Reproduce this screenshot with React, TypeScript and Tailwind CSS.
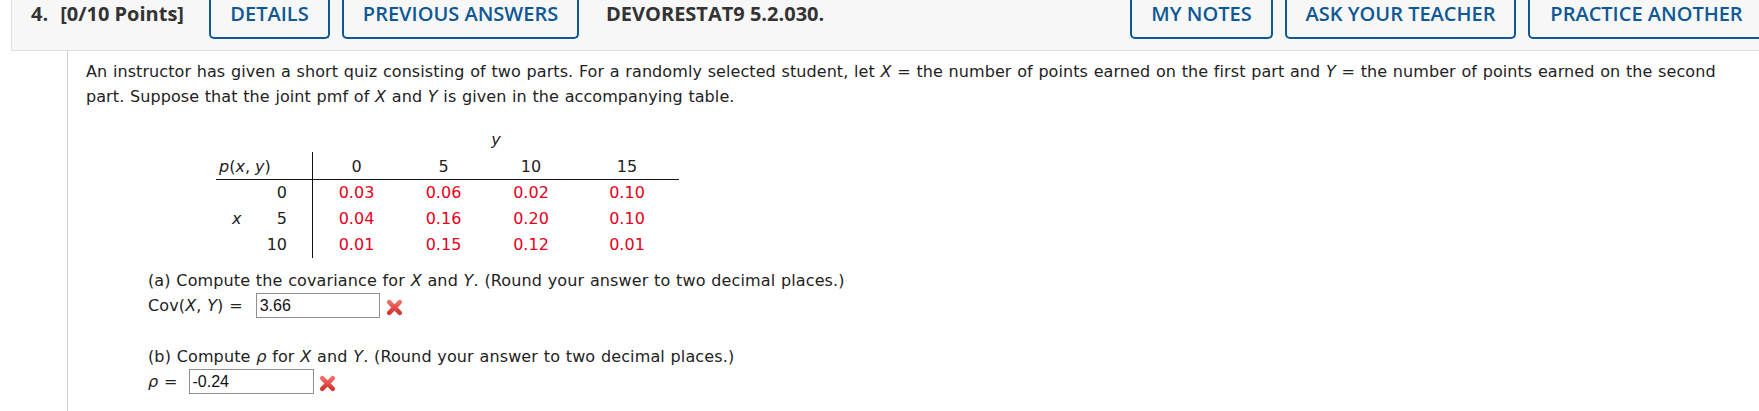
import React from "react";

const NavButton: React.FC<{ label: string; w: string }> = ({ label, w }) => (
  <div
    className={`${w} h-[39px] shrink-0 border-2 border-t-0 border-[#0d5895] rounded-b-[5px] text-[#0d5895] font-semibold text-[20px] leading-[24px] pt-[2px] flex justify-center items-start whitespace-nowrap`}
  >
    {label}
  </div>
);

const WrongMark = () => (
  <svg width="17" height="17" viewBox="0 0 16 16" className="mt-[4px]">
    <defs>
      <linearGradient id="xg" x1="0" y1="0" x2="0" y2="1">
        <stop offset="0" stopColor="#f26a66" />
        <stop offset="1" stopColor="#d63430" />
      </linearGradient>
    </defs>
    <path d="M3 3 L13 13 M13 3 L3 13" stroke="url(#xg)" strokeWidth="4.2" strokeLinecap="round" fill="none" />
  </svg>
);

const cols = ["w-[87px]", "w-[87px]", "w-[88px]", "w-[104px]"];
const heads = ["0", "5", "10", "15"];
const rows = [
  { x: "0", vals: ["0.03", "0.06", "0.02", "0.10"], label: "" },
  { x: "5", vals: ["0.04", "0.16", "0.20", "0.10"], label: "x" },
  { x: "10", vals: ["0.01", "0.15", "0.12", "0.01"], label: "" },
];

export default function App() {
  return (
    <div className="w-full h-[411px] bg-white overflow-hidden">
      {/* header band */}
      <div className="ml-[11px] h-[51px] bg-[#f7f7f7] border-l border-b border-[#dddddd] flex items-start font-['Open_Sans',sans-serif] mr-[-6px]">
        <div className="w-[197px] shrink-0 pl-[19px] pt-[2px] leading-[24px] text-[20px] font-bold text-[#333] whitespace-nowrap">
          <span className="mr-[12px]">4.</span>[0/10 Points]
        </div>
        <NavButton label="DETAILS" w="w-[121px]" />
        <div className="w-[12px] shrink-0" />
        <NavButton label="PREVIOUS ANSWERS" w="w-[237px]" />
        <div className="ml-[27px] pt-[2px] leading-[24px] text-[20px] font-bold text-[#333] whitespace-nowrap">
          DEVORESTAT9 5.2.030.
        </div>
        <div className="ml-auto flex gap-[12px]">
          <NavButton label="MY NOTES" w="w-[143px]" />
          <NavButton label="ASK YOUR TEACHER" w="w-[231px]" />
          <NavButton label="PRACTICE ANOTHER" w="w-[237px]" />
        </div>
      </div>

      {/* question body */}
      <div className="ml-[67px] h-[360px] border-l border-[#cfcfcf] pl-[18px] pr-[24px] pt-[8px] font-['DejaVu_Sans',Verdana,sans-serif] text-[16px] leading-[25px] text-[#222]">
        <p className="tracking-[0.08px] [word-spacing:0.5px]">
          An instructor has given a short quiz consisting of two parts. For a randomly selected student, let <i>X</i> = the
          number of points earned on the first part and <i>Y</i> = the number of points earned on the second part. Suppose
          that the joint pmf of <i>X</i> and <i>Y</i> is given in the accompanying table.
        </p>

        <div className="ml-[130px] mt-[19px] w-[463px]">
          <div className="flex h-[24px] leading-[24px]">
            <div className="w-[97px]" />
            <div className="w-[366px] text-center italic">y</div>
          </div>
          <div className="flex h-[28px] border-b border-[#111]">
            <div className="w-[97px] border-r border-[#111] pl-[3px] pt-[2px] leading-[26px]">
              <i>p</i>(<i>x</i>, <i>y</i>)
            </div>
            {heads.map((h, i) => (
              <div key={i} className={`${cols[i]} text-center pt-[2px] leading-[26px]`}>
                {h}
              </div>
            ))}
          </div>
          {rows.map((r, ri) => (
            <div key={ri} className="flex h-[26px] leading-[26px]">
              <div className="w-[97px] border-r border-[#111] flex justify-between pl-[16px] pr-[25px]">
                <i>{r.label}</i>
                <span>{r.x}</span>
              </div>
              {r.vals.map((v, i) => (
                <div key={i} className={`${cols[i]} text-center text-[#e8001a]`}>
                  {v}
                </div>
              ))}
            </div>
          ))}
        </div>

        <div className="ml-[62px] mt-[10px] tracking-[0.12px] [word-spacing:0.5px]">
          <div>
            (a) Compute the covariance for <i>X</i> and <i>Y</i>. (Round your answer to two decimal places.)
          </div>
          <div className="flex items-center h-[25px]">
            <span>
              Cov(<i>X</i>, <i>Y</i>) =
            </span>
            <input
              readOnly
              value="3.66"
              className="ml-[13px] w-[124px] h-[25px] border border-[#8f8f8f] px-[3px] font-['Liberation_Sans',Arial,sans-serif] text-[16px] tracking-normal text-[#111] outline-none"
            />
            <span className="ml-[6px]">
              <WrongMark />
            </span>
          </div>

          <div className="mt-[26px]">
            (b) Compute <i>ρ</i> for <i>X</i> and <i>Y</i>. (Round your answer to two decimal places.)
          </div>
          <div className="flex items-center h-[25px]">
            <span>
              <i>ρ</i> =
            </span>
            <input
              readOnly
              value="-0.24"
              className="ml-[11px] w-[125px] h-[25px] border border-[#8f8f8f] px-[3px] font-['Liberation_Sans',Arial,sans-serif] text-[16px] tracking-normal text-[#111] outline-none"
            />
            <span className="ml-[5px]">
              <WrongMark />
            </span>
          </div>
        </div>
      </div>
    </div>
  );
}
